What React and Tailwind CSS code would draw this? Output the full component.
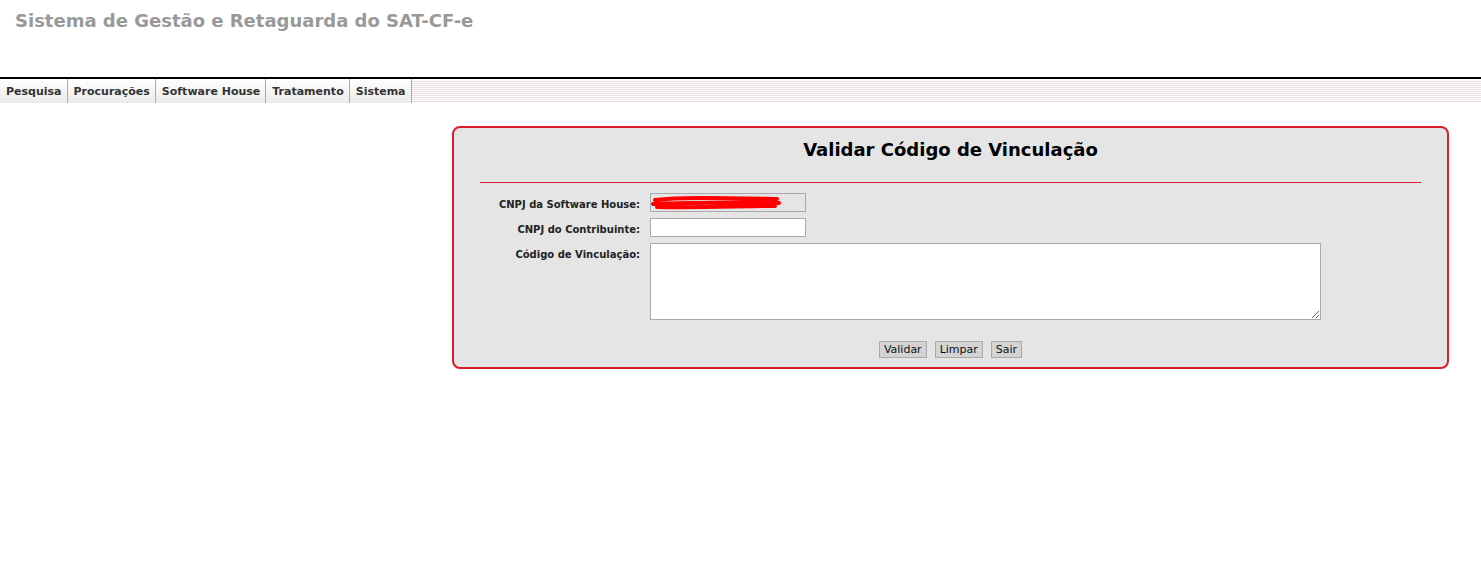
import React from 'react';

const font = { fontFamily: 'Verdana, "DejaVu Sans", sans-serif' };

const tabs = ['Pesquisa', 'Procurações', 'Software House', 'Tratamento', 'Sistema'];

const Scribble = () => (
  <svg className="absolute left-0 top-0 pointer-events-none" width="140" height="20" viewBox="0 0 140 20">
    <path
      d="M4 6 C30 3 70 4 126 5 M2 10 C40 9 90 8 128 9 M6 13 C50 14 90 12 124 12"
      stroke="#ff0000"
      strokeWidth="4"
      strokeLinecap="round"
      fill="none"
    />
  </svg>
);

const Field = ({ label, children }) => (
  <div className="flex items-start">
    <label className="w-[170px] pr-[10px] text-right text-[10px] leading-[14px] font-bold text-[#222] pt-[5px]">
      {label}
    </label>
    {children}
  </div>
);

export default function App() {
  return (
    <div className="min-h-[573px] bg-white" style={font}>
      {/* Header */}
      <div className="h-[77px] pl-[15px] pt-[7px]">
        <h1 className="text-[18px] font-bold text-[#999999]">Sistema de Gestão e Retaguarda do SAT-CF-e</h1>
      </div>

      {/* Menu */}
      <div className="border-t-[2px] border-black flex h-[26px]">
        {tabs.map((t) => (
          <div
            key={t}
            className="pl-[6px] pr-[5px] pt-[3px] flex items-center text-[11px] font-bold text-[#333] border-r border-[#aaaaaa] bg-gradient-to-b from-white to-[#ebebeb]"
          >
            {t}
          </div>
        ))}
        <div className="flex-1 mt-[1px] h-[23px] bg-[repeating-linear-gradient(to_bottom,#fff_0px,#fff_1px,#f3d8d8_1px,#f3d8d8_2px,#fff_2px,#fff_3px,#e4e4e4_3px,#e4e4e4_4px)]" />
      </div>

      {/* Content */}
      <div className="flex pt-[23px]">
        <div className="w-[452px] shrink-0" />
        <div className="w-[997px] h-[243px] border-2 border-[#d81e2a] rounded-[8px] bg-[#e5e5e5] px-[26px]">
          <h2 className="text-center text-[18px] font-bold text-black pt-[8px] h-[54px]">Validar Código de Vinculação</h2>
          <div className="h-px bg-[#d81e2a] mb-[10px]" />
          <div className="flex flex-col gap-[6px]">
            <Field label="CNPJ da Software House:">
              <div className="relative w-[156px] h-[19px] border border-[#aaaaaa] bg-[#e5e5e5]">
                <Scribble />
              </div>
            </Field>
            <Field label="CNPJ do Contribuinte:">
              <input className="w-[156px] h-[19px] border border-[#aaaaaa] bg-white outline-none" />
            </Field>
            <Field label="Código de Vinculação:">
              <textarea className="w-[671px] h-[77px] border border-[#aaaaaa] bg-white outline-none resize block" />
            </Field>
          </div>
          <div className="flex justify-center gap-[8px] mt-[21px]">
            {['Validar', 'Limpar', 'Sair'].map((b) => (
              <button
                key={b}
                className="h-[17px] px-[4px] text-[11px] leading-[14px] text-[#111] bg-[#d3d3d3] border border-[#aaaaaa]"
              >
                {b}
              </button>
            ))}
          </div>
        </div>
      </div>
    </div>
  );
}
